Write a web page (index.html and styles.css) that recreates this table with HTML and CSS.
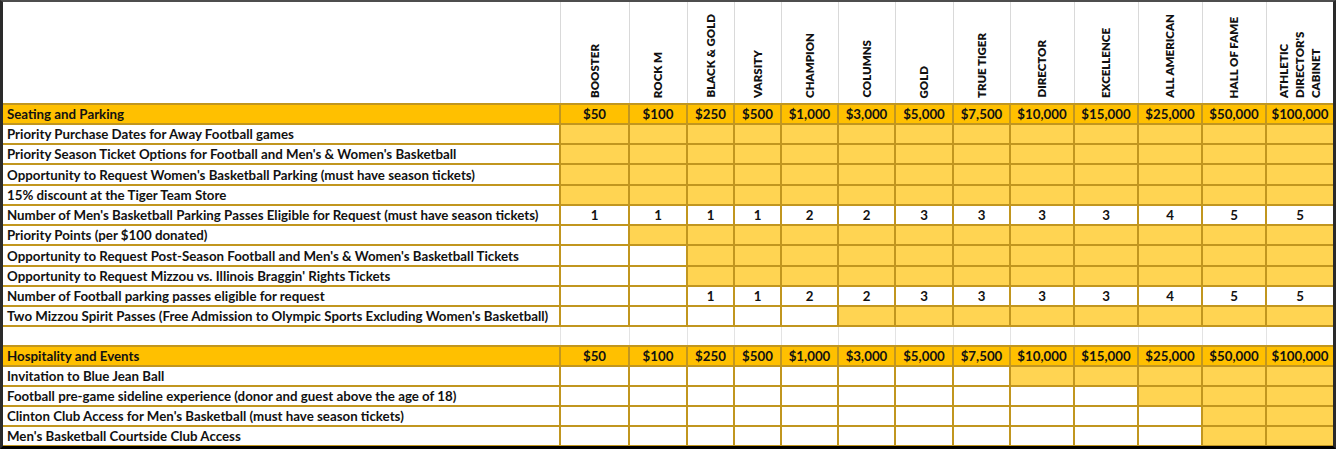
FILE: index.html
```html
<!DOCTYPE html>
<html>
<head>
<meta charset="utf-8">
<link rel="stylesheet" href="styles.css">
</head>
<body>
<div class="sheet">
<table>
<colgroup>
<col class="c-label">
<col style="width:69px"><col style="width:58px"><col style="width:47px"><col style="width:47px"><col style="width:57px"><col style="width:57px"><col style="width:58px"><col style="width:57px"><col style="width:64px"><col style="width:64px"><col style="width:64px"><col style="width:64px"><col style="width:67px">
</colgroup>
<thead>
<tr class="hdr">
<th class="blank"></th>
<th><div class="vt">BOOSTER</div></th>
<th><div class="vt">ROCK M</div></th>
<th><div class="vt">BLACK &amp; GOLD</div></th>
<th><div class="vt">VARSITY</div></th>
<th><div class="vt">CHAMPION</div></th>
<th><div class="vt">COLUMNS</div></th>
<th><div class="vt">GOLD</div></th>
<th><div class="vt">TRUE TIGER</div></th>
<th><div class="vt">DIRECTOR</div></th>
<th><div class="vt">EXCELLENCE</div></th>
<th><div class="vt">ALL AMERICAN</div></th>
<th><div class="vt">HALL OF FAME</div></th>
<th><div class="vt wrap">ATHLETIC DIRECTOR'S CABINET</div></th>
</tr>
</thead>
<tbody>
<tr class="sec">
<td>Seating and Parking</td><td>$50</td><td>$100</td><td>$250</td><td>$500</td><td>$1,000</td><td>$3,000</td><td>$5,000</td><td>$7,500</td><td>$10,000</td><td>$15,000</td><td>$25,000</td><td>$50,000</td><td>$100,000</td>
</tr>
<tr>
<td>Priority Purchase Dates for Away Football games</td><td class="f"></td><td class="f"></td><td class="f"></td><td class="f"></td><td class="f"></td><td class="f"></td><td class="f"></td><td class="f"></td><td class="f"></td><td class="f"></td><td class="f"></td><td class="f"></td><td class="f"></td>
</tr>
<tr>
<td>Priority Season Ticket Options for Football and Men's &amp; Women's Basketball</td><td class="f"></td><td class="f"></td><td class="f"></td><td class="f"></td><td class="f"></td><td class="f"></td><td class="f"></td><td class="f"></td><td class="f"></td><td class="f"></td><td class="f"></td><td class="f"></td><td class="f"></td>
</tr>
<tr class="tall">
<td>Opportunity to Request Women's Basketball Parking (must have season tickets)</td><td class="f"></td><td class="f"></td><td class="f"></td><td class="f"></td><td class="f"></td><td class="f"></td><td class="f"></td><td class="f"></td><td class="f"></td><td class="f"></td><td class="f"></td><td class="f"></td><td class="f"></td>
</tr>
<tr>
<td>15% discount at the Tiger Team Store</td><td class="f"></td><td class="f"></td><td class="f"></td><td class="f"></td><td class="f"></td><td class="f"></td><td class="f"></td><td class="f"></td><td class="f"></td><td class="f"></td><td class="f"></td><td class="f"></td><td class="f"></td>
</tr>
<tr>
<td>Number of Men's Basketball Parking Passes Eligible for Request (must have season tickets)</td><td>1</td><td>1</td><td>1</td><td>1</td><td>2</td><td>2</td><td>3</td><td>3</td><td>3</td><td>3</td><td>4</td><td>5</td><td>5</td>
</tr>
<tr>
<td>Priority Points (per $100 donated)</td><td></td><td class="f"></td><td class="f"></td><td class="f"></td><td class="f"></td><td class="f"></td><td class="f"></td><td class="f"></td><td class="f"></td><td class="f"></td><td class="f"></td><td class="f"></td><td class="f"></td>
</tr>
<tr class="tall">
<td>Opportunity to Request Post-Season Football and Men's &amp; Women's Basketball Tickets</td><td></td><td></td><td class="f"></td><td class="f"></td><td class="f"></td><td class="f"></td><td class="f"></td><td class="f"></td><td class="f"></td><td class="f"></td><td class="f"></td><td class="f"></td><td class="f"></td>
</tr>
<tr>
<td>Opportunity to Request Mizzou vs. Illinois Braggin' Rights Tickets</td><td></td><td></td><td class="f"></td><td class="f"></td><td class="f"></td><td class="f"></td><td class="f"></td><td class="f"></td><td class="f"></td><td class="f"></td><td class="f"></td><td class="f"></td><td class="f"></td>
</tr>
<tr>
<td>Number of Football parking passes eligible for request</td><td></td><td></td><td>1</td><td>1</td><td>2</td><td>2</td><td>3</td><td>3</td><td>3</td><td>3</td><td>4</td><td>5</td><td>5</td>
</tr>
<tr>
<td>Two Mizzou Spirit Passes (Free Admission to Olympic Sports Excluding Women's Basketball)</td><td></td><td></td><td></td><td></td><td></td><td class="f"></td><td class="f"></td><td class="f"></td><td class="f"></td><td class="f"></td><td class="f"></td><td class="f"></td><td class="f"></td>
</tr>
<tr class="gap">
<td></td><td></td><td></td><td></td><td></td><td></td><td></td><td></td><td></td><td></td><td></td><td></td><td></td><td></td>
</tr>
<tr class="sec">
<td>Hospitality and Events</td><td>$50</td><td>$100</td><td>$250</td><td>$500</td><td>$1,000</td><td>$3,000</td><td>$5,000</td><td>$7,500</td><td>$10,000</td><td>$15,000</td><td>$25,000</td><td>$50,000</td><td>$100,000</td>
</tr>
<tr>
<td>Invitation to Blue Jean Ball</td><td></td><td></td><td></td><td></td><td></td><td></td><td></td><td></td><td class="f"></td><td class="f"></td><td class="f"></td><td class="f"></td><td class="f"></td>
</tr>
<tr>
<td>Football pre-game sideline experience (donor and guest above the age of 18)</td><td></td><td></td><td></td><td></td><td></td><td></td><td></td><td></td><td></td><td></td><td class="f"></td><td class="f"></td><td class="f"></td>
</tr>
<tr>
<td>Clinton Club Access for Men's Basketball (must have season tickets)</td><td></td><td></td><td></td><td></td><td></td><td></td><td></td><td></td><td></td><td></td><td></td><td class="f"></td><td class="f"></td>
</tr>
<tr>
<td>Men's Basketball Courtside Club Access</td><td></td><td></td><td></td><td></td><td></td><td></td><td></td><td></td><td></td><td></td><td></td><td class="f"></td><td class="f"></td>
</tr>
</tbody>
</table>
</div>
</body>
</html>
```

FILE: styles.css
```css
html, body {
  margin: 0;
  padding: 0;
  background: #ffffff;
}

.sheet {
  width: 1336px;
  height: 449px;
  box-sizing: border-box;
  border-top: 2px solid #4d4d4d;
  border-left: 3px solid #2a2a2a;
  border-right: 3px solid #2a2a2a;
  border-bottom: 3px solid #000000;
  overflow: hidden;
  background: #ffffff;
  font-family: Lato, "Open Sans", sans-serif;
  font-weight: 700;
  font-size: 13.3px;
  color: #111111;
}

table {
  border-collapse: collapse;
  table-layout: fixed;
  width: 1330px;
}

.c-label {
  width: 557px;
}

th, td {
  padding: 0;
  overflow: hidden;
  white-space: nowrap;
}

/* header row with rotated tier names */
.hdr {
  height: 102px;
}

.hdr th {
  vertical-align: bottom;
  text-align: center;
  border-left: 1px solid #d9d9d9;
  border-right: 1px solid #d9d9d9;
  padding-bottom: 2px;
  font-weight: 700;
}

.hdr th.blank {
  border-left: none;
}

.vt {
  display: inline-block;
  writing-mode: vertical-rl;
  transform: rotate(180deg);
  font-size: 11.5px;
  font-weight: 800;
  line-height: 16px;
  text-align: start;
  white-space: nowrap;
}

.vt.wrap {
  white-space: normal;
  height: 86px;
}

/* body rows */
tbody tr {
  height: 20px;
}

tbody tr.tall {
  height: 21px;
}

tbody td {
  border: 2px solid #c1961f;
  text-align: center;
  line-height: 16px;
  background: #ffffff;
}

tbody td:first-child {
  text-align: left;
  padding-left: 4px;
  border-left: none;
}

tbody td:last-child {
  border-right: none;
}

tbody td.f {
  background: #ffd452;
}

tr.sec td {
  background: #ffc000;
}

tr.gap td {
  border-top: 2px solid #c1961f;
  border-bottom: 2px solid #c1961f;
  border-left: 1px solid #e3e3e3;
  border-right: 1px solid #e3e3e3;
}

tr.gap td:first-child {
  border-left: none;
}
```
